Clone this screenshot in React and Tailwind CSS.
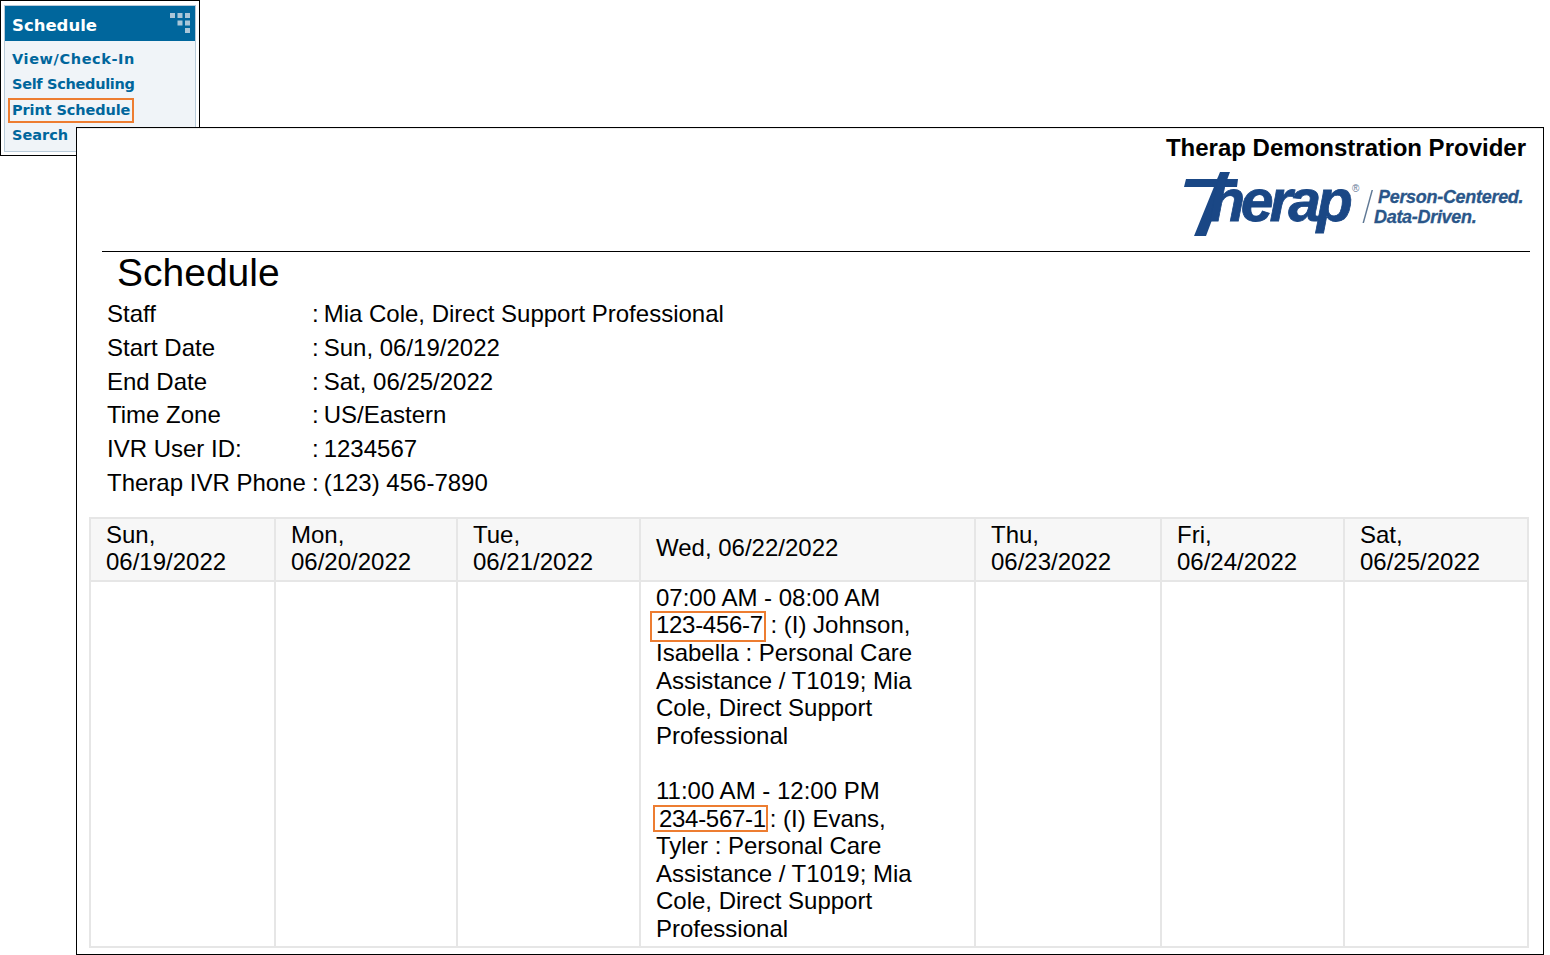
import React from 'react';

const days = [
  { label: 'Sun, 06/19/2022', width: 'w-[185px]' },
  { label: 'Mon, 06/20/2022', width: 'w-[182px]' },
  { label: 'Tue, 06/21/2022', width: 'w-[183px]' },
  { label: 'Wed, 06/22/2022', width: 'w-[335px]' },
  { label: 'Thu, 06/23/2022', width: 'w-[186px]' },
  { label: 'Fri, 06/24/2022', width: 'w-[183px]' },
  { label: 'Sat, 06/25/2022', width: 'w-[184px]' },
];

const info = [
  ['Staff', 'Mia Cole, Direct Support Professional'],
  ['Start Date', 'Sun, 06/19/2022'],
  ['End Date', 'Sat, 06/25/2022'],
  ['Time Zone', 'US/Eastern'],
  ['IVR User ID:', '1234567'],
  ['Therap IVR Phone', '(123) 456-7890'],
];

const menuLinks = [
  { label: 'View/Check-In', className: 'tracking-[0.6px]' },
  { label: 'Self Scheduling', className: 'tracking-[-0.3px]' },
  { label: 'Print Schedule', className: 'tracking-[-0.1px] outline-2 outline-offset-[2px] outline-[#ed7d31]' },
  { label: 'Search', className: 'tracking-[0px]' },
];

const GridIcon = () => (
  <svg width="21" height="21" viewBox="0 0 21 21" fill="#a9c6d8">
    <rect x="0" y="0" width="5" height="5" />
    <rect x="7.5" y="0" width="5" height="5" />
    <rect x="15" y="0" width="5" height="5" />
    <rect x="7.5" y="7.5" width="5" height="5" />
    <rect x="15" y="7.5" width="5" height="5" />
    <rect x="15" y="15" width="5" height="5" />
  </svg>
);

const Logo = () => (
  <svg width="346" height="74" viewBox="0 0 346 74" className="block">
    <polygon points="3,15 55,15 54,23 1,23" fill="#1a4785" />
    <polygon points="37,8 47,8 23,72 11,72" fill="#1a4785" />
    <text x="26" y="57" fontFamily="'Liberation Sans', sans-serif" fontWeight="700" fontStyle="italic" fontSize="59" letterSpacing="-4.2" stroke="#1a4785" strokeWidth="0.8" fill="#1a4785">herap</text>
    <text x="169" y="28" fontFamily="'Liberation Sans', sans-serif" fontSize="10" fill="#5f7894">®</text>
    <polygon points="188.5,26 190,26 181,59 179.5,59" fill="#5f7894" />
    <text x="195" y="39" fontFamily="'Liberation Sans', sans-serif" fontWeight="700" fontStyle="italic" fontSize="18" letterSpacing="-0.3" stroke="#2a5689" strokeWidth="0.3" fill="#2a5689">Person-Centered.</text>
    <text x="191" y="59" fontFamily="'Liberation Sans', sans-serif" fontWeight="700" fontStyle="italic" fontSize="18" letterSpacing="-0.3" stroke="#2a5689" strokeWidth="0.3" fill="#2a5689">Data-Driven.</text>
  </svg>
);

export default function App() {
  return (
    <div className="relative w-[1550px] h-[955px] bg-white overflow-hidden font-['Liberation_Sans',Arial,sans-serif] text-black">
      {/* menu window */}
      <div className="absolute left-0 top-0 w-[200px] h-[156px] border border-black bg-white pt-[4px] px-[3px]">
        <div className="h-[147px] border border-[#b9cbd9] bg-[#f0f4f8] font-['DejaVu_Sans',Verdana,sans-serif]">
          <div className="h-[35px] bg-[#00669c] flex items-center justify-between pl-[7px] pr-[4px]">
            <span className="text-white font-bold text-[16.5px] pt-[5px]">Schedule</span>
            <GridIcon />
          </div>
          <div className="flex flex-col pt-[6px] pl-[7px]">
            {menuLinks.map((link) => (
              <div key={link.label} className="h-[25.3px] flex items-center">
                <span className={`text-[#00669c] font-bold text-[14.5px] leading-[17px] ${link.className}`}>
                  {link.label}
                </span>
              </div>
            ))}
          </div>
        </div>
      </div>

      {/* printed schedule window */}
      <div className="absolute left-[76px] top-[127px] w-[1468px] h-[828px] border border-black bg-white">
        <div className="h-[1px] bg-[#ececec]" />
        <div className="flex flex-col items-end pr-[17px] pt-[5px] h-[122px]">
          <div className="text-[24px] leading-[28px] font-bold">Therap Demonstration Provider</div>
          <div className="mt-[2px] mr-[-3px]">
            <Logo />
          </div>
        </div>
        <div className="ml-[25px] mr-[13px] border-t border-black">
          <h1 className="ml-[15px] text-[39px] leading-[42px]">Schedule</h1>
          <div className="ml-[5px] mt-[3px] text-[24px]">
            {info.map(([label, value]) => (
              <div key={label} className="grid grid-cols-[205px_1fr] h-[33.8px] leading-[33.8px]">
                <span>{label}</span>
                <span>:<span className="ml-[5px]">{value}</span></span>
              </div>
            ))}
          </div>
        </div>
        <table className="ml-[12px] mt-[17px] w-[1439px] table-fixed border-collapse text-[24px] leading-[27.6px]">
          <thead>
            <tr className="h-[63px] bg-[#f7f7f7]">
              {days.map((day) => (
                <th key={day.label} className={`${day.width} border-2 border-[#e6e6e6] pl-[15px] pr-[30px] pb-[2px] font-normal text-left align-middle`}>
                  {day.label}
                </th>
              ))}
            </tr>
          </thead>
          <tbody>
            <tr className="h-[366px]">
              <td className="border-2 border-[#e6e6e6]" />
              <td className="border-2 border-[#e6e6e6]" />
              <td className="border-2 border-[#e6e6e6]" />
              <td className="border-2 border-[#e6e6e6] pl-[15px] pr-[40px] align-top pt-[2px]">
                <div>07:00 AM - 08:00 AM</div>
                <div>
                  <span className="relative mr-[1px] tracking-[-0.3px]">
                    123-456-7
                    <span className="absolute left-[-6px] right-[-3px] top-0 bottom-[-4px] border-2 border-[#ed7d31]" />
                  </span>{' '}
                  : (I) Johnson, Isabella : Personal Care Assistance / T1019; Mia Cole, Direct Support Professional
                </div>
                <div className="mt-[27.6px]">11:00 AM - 12:00 PM</div>
                <div>
                  <span className="relative ml-[3px] mr-[4px] tracking-[-0.3px]">
                    234-567-1
                    <span className="absolute left-[-6px] right-[-2px] top-0 bottom-0 border-2 border-[#ed7d31]" />
                  </span>
                  : (I) Evans, Tyler : Personal Care Assistance / T1019; Mia Cole, Direct Support Professional
                </div>
              </td>
              <td className="border-2 border-[#e6e6e6]" />
              <td className="border-2 border-[#e6e6e6]" />
              <td className="border-2 border-[#e6e6e6]" />
            </tr>
          </tbody>
        </table>
      </div>
    </div>
  );
}
